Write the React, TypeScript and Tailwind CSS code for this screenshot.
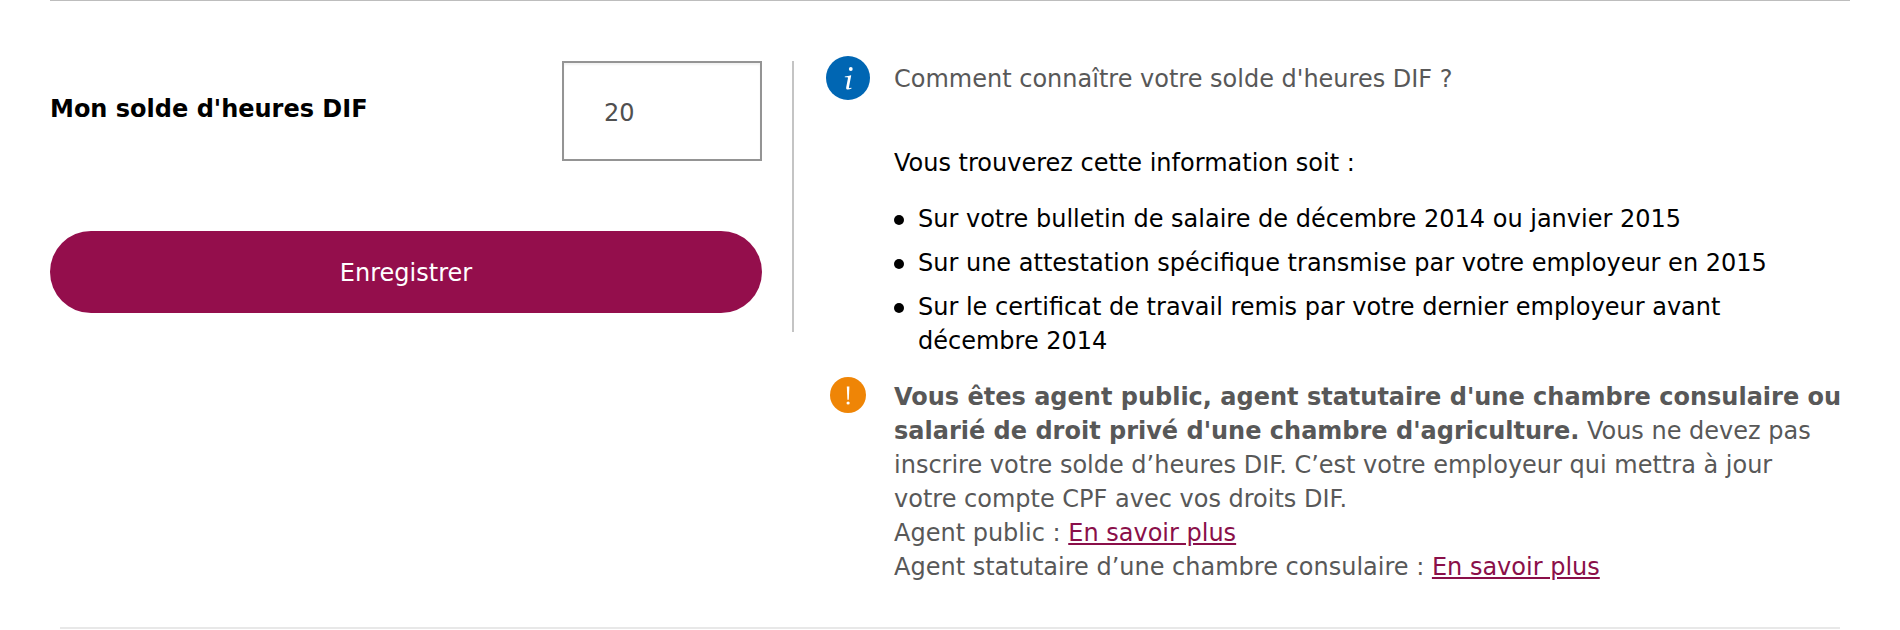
import { useState } from 'react';

const sources = [
  'Sur votre bulletin de salaire de décembre 2014 ou janvier 2015',
  'Sur une attestation spécifique transmise par votre employeur en 2015',
  'Sur le certificat de travail remis par votre dernier employeur avant décembre\u00a02014',
];

function InfoIcon() {
  return (
    <svg viewBox="0 0 44 44" className="w-11 h-11" aria-hidden="true">
      <circle cx="22" cy="22" r="22" fill="#0066b3" />
      <circle cx="24.8" cy="13" r="1.9" fill="#fff" />
      <path
        d="M18.8 20.4c2.1 0 3.900-.6 5.900-1.200l.5.4-2.200 11.400c-.2 1 .1 1.300.8 1.100l1.600-.4.2.8c-1.300.7-2.500 1-3.700 1-1.500 0-2-.8-1.700-2.300l1.700-8.600c.2-1-.1-1.300-.9-1.300h-2.200z"
        fill="#fff"
      />
    </svg>
  );
}

function WarningIcon() {
  return (
    <svg viewBox="0 0 36 36" className="w-9 h-9" aria-hidden="true">
      <circle cx="18" cy="18" r="18" fill="#ef8506" />
      <path d="M16.8 9.4h2.6l-.6 13.4h-1.4z" fill="#fff" />
      <circle cx="18.1" cy="26" r="1.6" fill="#fff" />
    </svg>
  );
}

export default function App() {
  const [hours, setHours] = useState('20');

  return (
    <main className="bg-white px-[50px] font-['DejaVu_Sans',Verdana,sans-serif] text-2xl leading-[34px] text-black">
      <div className="border-t border-[#bdbdbd] pt-[60px] flex items-start">
        {/* Form */}
        <form
          className="w-[744px] shrink border-r-2 border-[#c4c4c4] pr-[30px] pb-[19px]"
          onSubmit={(e) => e.preventDefault()}
        >
          <div className="flex items-start justify-between">
            <label htmlFor="dif-hours" className="pt-[31px] font-bold">
              Mon solde d'heures DIF
            </label>
            <input
              id="dif-hours"
              type="text"
              inputMode="numeric"
              value={hours}
              onChange={(e) => setHours(e.target.value)}
              className="w-[200px] h-[100px] border-2 border-[#949494] bg-white px-10 pt-1 text-[#505050] shadow-[inset_0_2px_2px_#f2f2f2]"
            />
          </div>
          <button
            type="submit"
            className="mt-[70px] block w-full h-[82px] rounded-full bg-[#940e4c] pt-[2px] text-white"
          >
            Enregistrer
          </button>
        </form>

        {/* Help */}
        <div className="flex-1 pl-8 pt-px">
          <section className="flex items-start gap-6">
            <div className="w-11 shrink-0 -mt-[6px]">
              <InfoIcon />
            </div>
            <div>
              <h2 className="text-[#585858]">Comment connaître votre solde d'heures DIF ?</h2>
              <p className="mt-[50px]">Vous trouverez cette information soit :</p>
              <ul className="mt-[22px] flex flex-col gap-[10px]">
                {sources.map((source) => (
                  <li key={source} className="flex items-start gap-[14px]">
                    <span className="mt-[13px] h-[10px] w-[10px] shrink-0 rounded-full bg-black" />
                    {source}
                  </li>
                ))}
              </ul>
            </div>
          </section>

          <section className="mt-[22px] flex items-start gap-6">
            <div className="flex w-11 shrink-0 justify-center -mt-[3px]">
              <WarningIcon />
            </div>
            <div className="text-[#585858]">
              <p>
                <strong className="font-bold">
                  Vous êtes agent public, agent statutaire d'une chambre consulaire ou salarié de droit privé d'une
                  chambre d'agriculture.
                </strong>{' '}
                Vous ne devez pas inscrire votre solde d’heures DIF. C’est votre employeur qui mettra à jour
                votre&nbsp;compte CPF avec vos droits DIF.
              </p>
              <p>
                Agent public :{' '}
                <a href="#agent-public" className="text-[#8a0f49] underline">
                  En savoir plus
                </a>
              </p>
              <p>
                Agent statutaire d’une chambre consulaire :{' '}
                <a href="#agent-statutaire" className="text-[#8a0f49] underline">
                  En savoir plus
                </a>
              </p>
            </div>
          </section>
        </div>
      </div>
      <hr className="mx-[10px] mt-[43px] border-t-2 border-[#e8e8e8]" />
    </main>
  );
}
